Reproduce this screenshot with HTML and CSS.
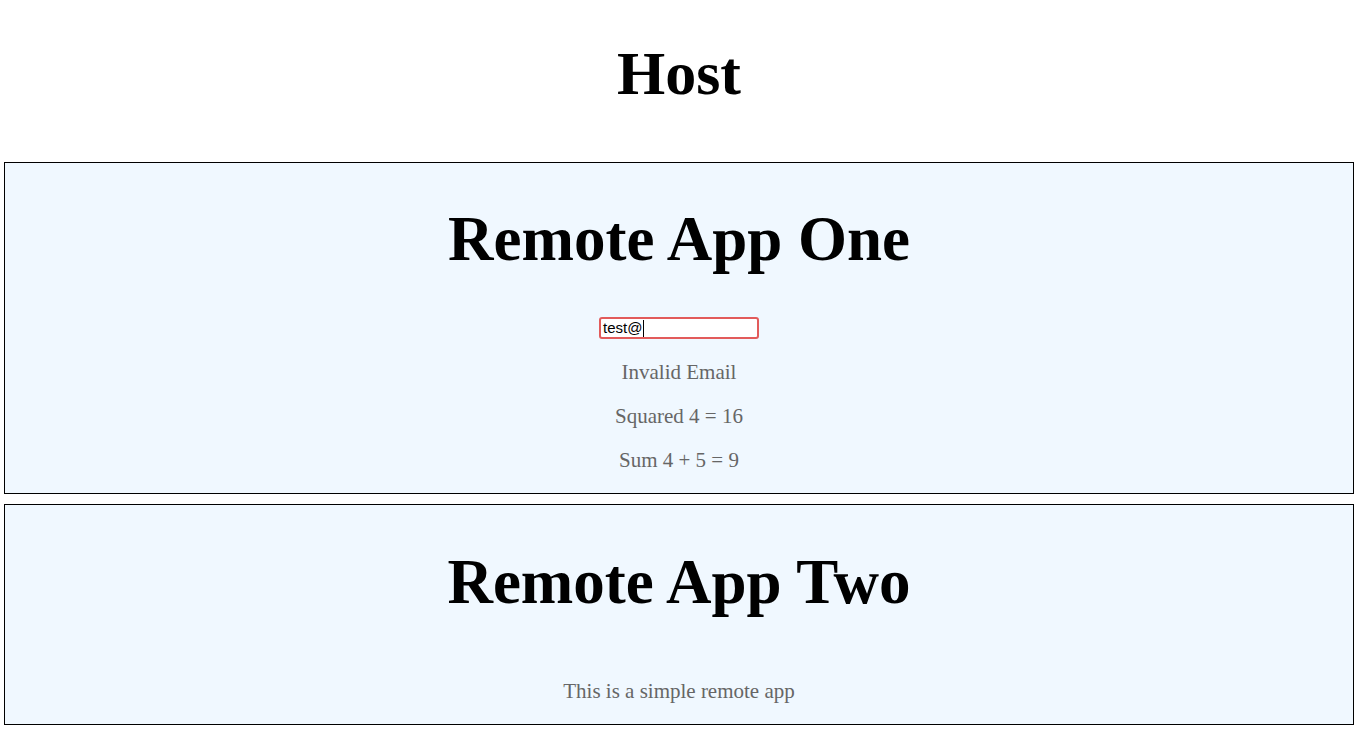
FILE: index.html
```html
<!DOCTYPE html>
<html lang="en">
<head>
<meta charset="utf-8">
<title>Host</title>
<link rel="stylesheet" href="styles.css">
</head>
<body>
  <h1 class="host-title">Host</h1>
  <section class="remote remote-one">
    <h1 class="remote-title">Remote App One</h1>
    <div class="field">
      <div class="email-input">test@<span class="caret"></span></div>
    </div>
    <p class="msg first">Invalid Email</p>
    <p class="msg">Squared 4 = 16</p>
    <p class="msg last">Sum 4 + 5 = 9</p>
  </section>
  <section class="remote remote-two">
    <h1 class="remote-title">Remote App Two</h1>
    <p class="msg simple">This is a simple remote app</p>
  </section>
</body>
</html>
```
FILE: styles.css
```css
html, body {
  margin: 0;
  padding: 0;
  background: #ffffff;
}
body {
  padding: 0 4px;
  font-family: "Liberation Serif", "Times New Roman", serif;
  color: #000;
}
.host-title, .remote-title {
  font-family: "Liberation Serif", "Times New Roman", serif;
  font-weight: bold;
  font-size: 62px;
  line-height: 72px;
  text-align: center;
  margin: 0;
}
.host-title {
  padding-top: 37px;
  margin-bottom: 53px;
}
.remote {
  background: #f0f8ff;
  border: 1px solid #000;
  display: flex;
  flex-direction: column;
  align-items: center;
}
.remote-one {
  height: 332px;
  box-sizing: border-box;
}
.remote-two {
  margin-top: 10px;
  height: 221px;
  box-sizing: border-box;
}
.remote-title {
  font-size: 63px;
  margin-top: 40px;
  align-self: stretch;
}
.remote-two .remote-title {
  margin-top: 41px;
}
.field {
  margin-top: 42px;
}
.email-input {
  width: 160px;
  height: 22px;
  box-sizing: border-box;
  border: 2px solid #e25b5b;
  border-radius: 3px;
  background: #fff;
  font-family: "Liberation Sans", Arial, sans-serif;
  font-size: 15px;
  line-height: 18px;
  padding: 0 2px;
  color: #000;
  display: flex;
  align-items: center;
}
.caret {
  display: inline-block;
  width: 1px;
  height: 17px;
  background: #000;
  margin-left: 1px;
}
.msg {
  font-size: 21px;
  line-height: 23px;
  color: #666666;
  margin: 21px 0 0;
  text-align: center;
}
.msg.first {
  margin-top: 22px;
}
.msg.simple {
  margin-top: 62px;
}
```
